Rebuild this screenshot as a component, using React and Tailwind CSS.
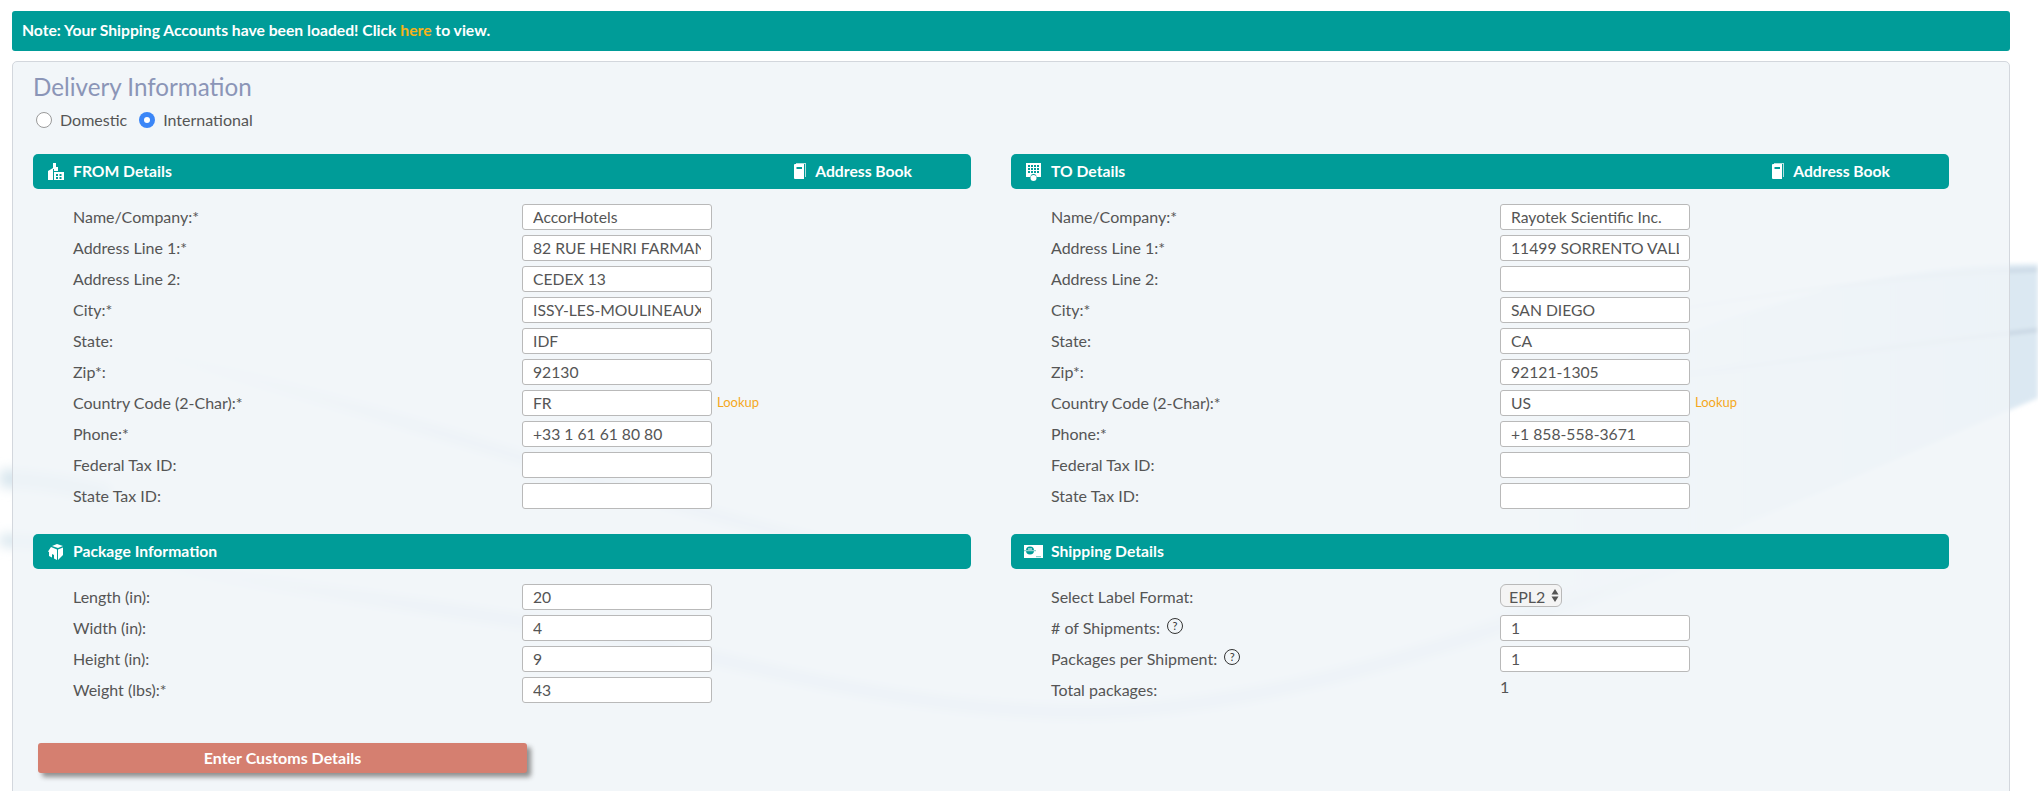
const fromRows = [
  ["Name/Company:*", "AccorHotels"],
  ["Address Line 1:*", "82 RUE HENRI FARMAN"],
  ["Address Line 2:", "CEDEX 13"],
  ["City:*", "ISSY-LES-MOULINEAUX"],
  ["State:", "IDF"],
  ["Zip*:", "92130"],
  ["Country Code (2-Char):*", "FR", true],
  ["Phone:*", "+33 1 61 61 80 80"],
  ["Federal Tax ID:", ""],
  ["State Tax ID:", ""],
];

const toRows = [
  ["Name/Company:*", "Rayotek Scientific Inc."],
  ["Address Line 1:*", "11499 SORRENTO VALLEY RD"],
  ["Address Line 2:", ""],
  ["City:*", "SAN DIEGO"],
  ["State:", "CA"],
  ["Zip*:", "92121-1305"],
  ["Country Code (2-Char):*", "US", true],
  ["Phone:*", "+1 858-558-3671"],
  ["Federal Tax ID:", ""],
  ["State Tax ID:", ""],
];

const packageRows = [
  ["Length (in):", "20"],
  ["Width (in):", "4"],
  ["Height (in):", "9"],
  ["Weight (lbs):*", "43"],
];

function BuildingsIcon() {
  return (
    <svg width="16" height="17" viewBox="0 0 16 17" fill="#fff">
      <path d="M5 0h3v4h2v4H6V6H5z" />
      <path d="M0 8l5-3v12H0z" />
      <path d="M6 9h10v8H6z" />
      <path d="M8 11h2v2H8zM11.500 11h2v2h-2zM8 14h2v2H8zM11.500 14h2v2h-2z" fill="#009c98" />
    </svg>
  );
}

function OfficeIcon() {
  return (
    <svg width="15" height="18" viewBox="0 0 15 18" fill="#fff">
      <path d="M0 0h15v14h-4.500a3 3 0 0 0-6 0H0z" />
      <circle cx="7.500" cy="15" r="3" />
      <path
        d="M2 2h2v2H2zM5 2h2v2H5zM8 2h2v2H8zM11 2h2v2h-2zM2 5h2v2H2zM5 5h2v2H5zM8 5h2v2H8zM11 5h2v2h-2zM2 8h2v2H2zM5 8h2v2H5zM8 8h2v2H8zM11 8h2v2h-2z"
        fill="#009c98"
      />
    </svg>
  );
}

function BookIcon() {
  return (
    <svg width="12" height="16" viewBox="0 0 12 16" fill="#fff">
      <path d="M2 0h10v14h-1V1H2z" opacity="0.7" />
      <path d="M1 1h9v15H1a1 1 0 0 1-1-1V2a1 1 0 0 1 1-1z" />
      <path d="M2.500 4h5.500v2H2.500z" fill="#009c98" />
    </svg>
  );
}

function PackageIcon() {
  return (
    <svg width="15" height="16" viewBox="0 0 15 16" fill="#fff">
      <path d="M9 0l6 2-5 2-6-2z" />
      <path d="M15 3.500V11l-5 5V5.500z" />
      <path d="M3 3l6 2.500V16l-3-1.500V11L4 10v3.500L1 12V8L0 7.500z" />
    </svg>
  );
}

function ShippingIcon() {
  return (
    <svg width="19" height="13" viewBox="0 0 19 13" fill="#fff">
      <path d="M0 0h19v13H0z" />
      <circle cx="6" cy="5.500" r="4" fill="#009c98" />
      <path d="M0 5h12v1.200H0zM12 11h5v1.200h-5z" fill="#8fd0ce" />
      <path d="M4 3.500h4v1H4z" />
    </svg>
  );
}

function HelpIcon() {
  return (
    <span className="ml-[7px] inline-flex h-4 w-4 -translate-y-1 items-center justify-center rounded-full border border-[#333] text-[11px] leading-none text-[#333]">
      ?
    </span>
  );
}

function SectionHeader({ icon, title, book }) {
  return (
    <div className="flex h-[35px] items-center rounded-[5px] bg-[#009c98] text-[15.700px] font-bold text-white">
      <span className="flex w-10 shrink-0 justify-center pl-[5px]">{icon}</span>
      <span>{title}</span>
      {book && (
        <span className="ml-auto mr-[59px] flex items-center gap-[9px]">
          <BookIcon />
          Address Book
        </span>
      )}
    </div>
  );
}

function Row({ label, children }) {
  return (
    <div className="flex h-[26px] items-center">
      <div className="w-[489px] shrink-0 pl-10 text-base text-[#555]">{label}</div>
      {children}
    </div>
  );
}

function TextInput({ value }) {
  return (
    <input
      type="text"
      readOnly
      value={value}
      className="h-[26px] w-[190px] rounded-[3px] border border-[#b9b9b9] bg-white px-[10px] text-[15.700px] text-[#555] outline-none"
    />
  );
}

function AddressRows({ rows }) {
  return (
    <div className="mt-[15px] flex flex-col gap-[5px]">
      {rows.map(([label, value, lookup]) => (
        <Row key={label} label={label}>
          <TextInput value={value} />
          {lookup && <a className="ml-[5px] text-[13px] text-[#f5a81c]">Lookup</a>}
        </Row>
      ))}
    </div>
  );
}

// the page's background picture: pale blue sweeps, mostly seen through the panel
function Waves() {
  return (
    <svg className="absolute inset-0 h-full w-full" viewBox="0 0 2038 791" fill="none">
      <defs>
        <filter id="soft" x="-10%" y="-30%" width="120%" height="160%">
          <feGaussianBlur stdDeviation="6" />
        </filter>
        <filter id="softer" x="-5%" y="-5%" width="110%" height="110%">
          <feGaussianBlur stdDeviation="2" />
        </filter>
        <linearGradient id="rightBand" gradientUnits="userSpaceOnUse" x1="1450" y1="0" x2="2010" y2="0">
          <stop offset="0" stopColor="#dbe8f2" stopOpacity="0" />
          <stop offset="1" stopColor="#dbe8f2" />
        </linearGradient>
        <linearGradient id="rightLine" gradientUnits="userSpaceOnUse" x1="1500" y1="0" x2="2010" y2="0">
          <stop offset="0" stopColor="#bccad9" stopOpacity="0" />
          <stop offset="1" stopColor="#bccad9" />
        </linearGradient>
        <linearGradient id="streak" gradientUnits="userSpaceOnUse" x1="100" y1="0" x2="1800" y2="0">
          <stop offset="0" stopColor="#d5e0ee" stopOpacity="0" />
          <stop offset="0.2" stopColor="#d5e0ee" />
          <stop offset="0.8" stopColor="#d5e0ee" />
          <stop offset="1" stopColor="#d5e0ee" stopOpacity="0" />
        </linearGradient>
      </defs>
      <g filter="url(#softer)">
        <path d="M1450 640C1700 550 1880 465 2038 398V264C1880 262 1700 310 1450 440Z" fill="url(#rightBand)" />
        <path d="M1500 340C1720 300 1900 272 2038 270" stroke="url(#rightLine)" strokeWidth="2" />
        <path d="M1500 400C1720 370 1900 345 2038 330" stroke="url(#rightLine)" strokeWidth="2.500" />
      </g>
      <g filter="url(#soft)">
        <path d="M120 345C280 385 420 425 560 470C700 512 800 540 900 560" stroke="url(#streak)" strokeWidth="10" />
        <path d="M120 560C300 590 460 610 640 640C800 680 950 715 1100 712C1300 705 1500 630 1800 520" stroke="url(#streak)" strokeWidth="12" />
        <path d="M0 478C40 480 70 485 110 495" stroke="#d8e6ee" strokeWidth="18" />
        <path d="M0 540C40 542 70 545 110 552" stroke="#d8e6ee" strokeWidth="12" />
      </g>
    </svg>
  );
}

export default function App() {
  return (
    <div
      className="relative h-[791px] overflow-hidden bg-white pl-3 pr-7 pt-[11px] text-[#555]"
      style={{ fontFamily: "Lato, sans-serif" }}
    >
      <Waves />
      <div className="relative">
        <div className="flex h-10 items-center rounded-[3px] bg-[#009c98] pl-[10px] text-[15.700px] font-bold text-white">
          <span>
            Note: Your Shipping Accounts have been loaded! Click <a className="text-[#f5b21a]">here</a> to view.
          </span>
        </div>

        <div className="mt-[10px] h-[800px] rounded-[5px] border border-[#d3d7dd] bg-[#f0f4f8]/85 pl-5 pr-[60px]">
          <h2 className="mt-[9px] text-[24.200px] leading-8 text-[#8b95b7]">Delivery Information</h2>
          <div className="mt-[7px] flex h-5 items-center text-base">
            <span className="ml-[3px] h-4 w-4 rounded-full border border-[#9a9a9a] bg-white" />
            <span className="ml-2">Domestic</span>
            <span className="ml-3 flex h-4 w-4 items-center justify-center rounded-full bg-[#3b86f7]">
              <span className="h-[6px] w-[6px] rounded-full bg-white" />
            </span>
            <span className="ml-2">International</span>
          </div>

          <div className="mt-6 grid grid-cols-2 gap-x-10">
            <div>
              <SectionHeader icon={<BuildingsIcon />} title="FROM Details" book />
              <AddressRows rows={fromRows} />
            </div>
            <div>
              <SectionHeader icon={<OfficeIcon />} title="TO Details" book />
              <AddressRows rows={toRows} />
            </div>

            <div className="mt-[25px]">
              <SectionHeader icon={<PackageIcon />} title="Package Information" />
              <div className="mt-[15px] flex flex-col gap-[5px]">
                {packageRows.map(([label, value]) => (
                  <Row key={label} label={label}>
                    <TextInput value={value} />
                  </Row>
                ))}
              </div>
            </div>
            <div className="mt-[25px]">
              <SectionHeader icon={<ShippingIcon />} title="Shipping Details" />
              <div className="mt-[15px] flex flex-col gap-[5px]">
                <Row label="Select Label Format:">
                  <div className="relative -mt-[3px] h-[23px] w-[62px]">
                    <select className="h-full w-full appearance-none rounded-md border border-[#b9b9b9] bg-[#f4f4f4] pl-2 text-base text-[#555] outline-none">
                      <option>EPL2</option>
                    </select>
                    <svg className="absolute right-[3px] top-[5px]" width="8" height="13" viewBox="0 0 8 13" fill="#555">
                      <path d="M4 0l3.500 5.500h-7zM4 13L.5 7.500h7z" />
                    </svg>
                  </div>
                </Row>
                <Row label={<># of Shipments:<HelpIcon /></>}>
                  <TextInput value="1" />
                </Row>
                <Row label={<>Packages per Shipment:<HelpIcon /></>}>
                  <TextInput value="1" />
                </Row>
                <Row label="Total packages:">
                  <span className="-mt-[6px] text-base">1</span>
                </Row>
              </div>
            </div>
          </div>

          <button className="ml-[5px] mt-10 h-[30px] w-[489px] rounded-[3px] bg-[#d57f70] text-base font-bold text-white shadow-[4px_4px_5px_#8f8f8f]">
            Enter Customs Details
          </button>
        </div>
      </div>
    </div>
  );
}
